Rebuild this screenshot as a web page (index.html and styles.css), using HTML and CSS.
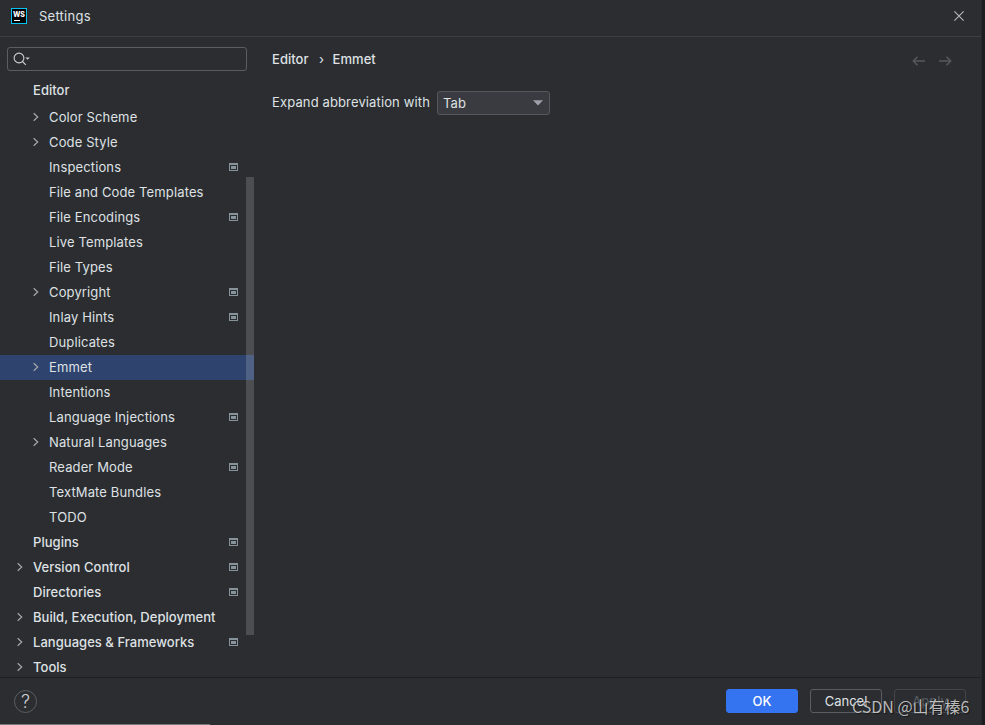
FILE: index.html
```html
<!DOCTYPE html>
<html lang="en">
<head>
<meta charset="utf-8">
<title>Settings</title>
<link rel="stylesheet" href="styles.css">
</head>
<body>
<svg width="0" height="0" class="defs">
  <symbol id="chev" viewBox="0 0 8 10"><path d="M1.700 1.200 5.700 5 1.700 8.800" fill="none" stroke="currentColor" stroke-width="1.2"/></symbol>
  <symbol id="proj" viewBox="0 0 9 8"><path fill-rule="evenodd" d="M0 0h9v8H0zM1 2v5h7V2zM2 3h5v3H2z" fill="currentColor"/></symbol>
</svg>
<div class="window">
  <header class="titlebar">
    <svg class="logo" width="16" height="16" viewBox="0 0 16 16"><rect width="16" height="16" fill="#07c3f2"/><rect x="1" y="1" width="14" height="14" fill="#000"/><text x="2" y="8.700" textLength="12" lengthAdjust="spacingAndGlyphs" class="logo-text">WS</text><path d="M3 12h6v1H3z" fill="#fff"/></svg>
    <span class="title">Settings</span>
    <svg class="close" width="10" height="10" viewBox="0 0 10 10"><path d="M.4.4 9.6 9.6M9.6.4.4 9.6" stroke="#b4b8bf" stroke-width="1.1"/></svg>
  </header>
  <div class="main">
    <aside class="sidebar">
      <div class="search"><svg width="18" height="14" viewBox="0 0 18 14"><circle cx="6" cy="6" r="4.900" fill="none" stroke="#ced0d6" stroke-width="1.1"/><path d="m9.500 9.500 3.300 3.300" stroke="#ced0d6" stroke-width="1.1"/><path d="M12.400 5.500h4.400l-2.200 2.200z" fill="#ced0d6"/></svg></div>
      <div class="row top head"><i></i><span>Editor</span></div>
      <div class="tree">
        <div class="row"><svg class="chev"><use href="#chev"/></svg><span>Color Scheme</span></div>
        <div class="row"><svg class="chev"><use href="#chev"/></svg><span>Code Style</span></div>
        <div class="row"><i></i><span>Inspections</span><svg class="proj"><use href="#proj"/></svg></div>
        <div class="row"><i></i><span>File and Code Templates</span></div>
        <div class="row"><i></i><span>File Encodings</span><svg class="proj"><use href="#proj"/></svg></div>
        <div class="row"><i></i><span>Live Templates</span></div>
        <div class="row"><i></i><span>File Types</span></div>
        <div class="row"><svg class="chev"><use href="#chev"/></svg><span>Copyright</span><svg class="proj"><use href="#proj"/></svg></div>
        <div class="row"><i></i><span>Inlay Hints</span><svg class="proj"><use href="#proj"/></svg></div>
        <div class="row"><i></i><span>Duplicates</span></div>
        <div class="row selected"><svg class="chev"><use href="#chev"/></svg><span>Emmet</span></div>
        <div class="row"><i></i><span>Intentions</span></div>
        <div class="row"><i></i><span>Language Injections</span><svg class="proj"><use href="#proj"/></svg></div>
        <div class="row"><svg class="chev"><use href="#chev"/></svg><span>Natural Languages</span></div>
        <div class="row"><i></i><span>Reader Mode</span><svg class="proj"><use href="#proj"/></svg></div>
        <div class="row"><i></i><span>TextMate Bundles</span></div>
        <div class="row"><i></i><span>TODO</span></div>
        <div class="row top"><i></i><span>Plugins</span><svg class="proj"><use href="#proj"/></svg></div>
        <div class="row top"><svg class="chev"><use href="#chev"/></svg><span>Version Control</span><svg class="proj"><use href="#proj"/></svg></div>
        <div class="row top"><i></i><span>Directories</span><svg class="proj"><use href="#proj"/></svg></div>
        <div class="row top"><svg class="chev"><use href="#chev"/></svg><span>Build, Execution, Deployment</span></div>
        <div class="row top"><svg class="chev"><use href="#chev"/></svg><span>Languages &amp; Frameworks</span><svg class="proj"><use href="#proj"/></svg></div>
        <div class="row top"><svg class="chev"><use href="#chev"/></svg><span>Tools</span></div>
      </div>
      <div class="scrollbar"></div>
    </aside>
    <section class="content">
      <div class="crumbs">
        <span>Editor</span><span class="sep">›</span><span>Emmet</span>
        <svg class="nav" width="40" height="10" viewBox="0 0 40 10"><path d="M13 5H1.5M5.5.8 1.3 5l4.2 4.2M27 5h11.500M34.500.8 38.700 5l-4.200 4.200" fill="none" stroke="#56585c" stroke-width="1.5"/></svg>
      </div>
      <div class="field"><span class="label">Expand abbreviation with</span>
        <div class="select"><span>Tab</span><svg width="10" height="6" viewBox="0 0 10 6"><path d="M0 .3h10L5 5.600z" fill="#9da0a8"/></svg></div>
      </div>
    </section>
  </div>
  <footer class="footer">
    <div class="help">?</div>
    <div class="btn ok">OK</div>
    <div class="btn">Cancel</div>
    <div class="btn disabled">Apply</div>
  </footer>
</div>
<div class="edge"></div>
<div class="bottom-strip"></div>
<div class="watermark">CSDN @山有榛6</div>
</body>
</html>
```
FILE: styles.css
```css
* { box-sizing: border-box; }
body {
  margin: 0;
  width: 985px;
  height: 725px;
  overflow: hidden;
  position: relative;
  display: flex;
  background: #2b2d30;
  color: #dfe1e5;
  font: 13px/16px Inter, "Liberation Sans", sans-serif;
  letter-spacing: 0.13px;
}
.defs { position: absolute; }
svg { display: block; flex: none; }
.window { width: 981px; height: 725px; display: flex; flex-direction: column; }
.titlebar {
  height: 37px;
  flex: none;
  display: flex;
  align-items: center;
  padding: 0 17px 4px 11px;
  border-bottom: 1px solid #3c3e42;
}
.logo-text { font: 800 7.5px Inter, sans-serif; letter-spacing: 0; fill: #fff; }
.title { margin-left: 12px; letter-spacing: 0.25px; }
.close { margin-left: auto; }
.main { height: 640px; display: flex; }
.sidebar {
  width: 254px;
  height: 640px;
  position: relative;
  display: flex;
  flex-direction: column;
  overflow: hidden;
}
.search {
  width: 240px;
  height: 24px;
  margin: 10px 0 0 7px;
  border: 1px solid #5a5d63;
  border-radius: 3px;
  display: flex;
  align-items: center;
  padding-left: 5px;
  flex: none;
}
.row {
  height: 25px;
  display: flex;
  align-items: center;
  padding: 0 16px 1px 32px;
  white-space: nowrap;
  flex: none;
}
.row i { width: 8px; flex: none; }
.row span { margin-left: 9px; }
.chev { width: 8px; height: 10px; color: #a5a8ad; }
.proj { width: 9px; height: 8px; margin-left: auto; color: #87939a; }
.top { padding-left: 16px; font-weight: 550; letter-spacing: 0.04px; }
.head { height: 24px; margin: 7px 0 3px; padding-bottom: 0; }
.tree { flex: none; }
.selected { background: #2e436e; }
.scrollbar {
  position: absolute;
  left: 246px;
  top: 140px;
  width: 8px;
  height: 458px;
  background: rgba(255, 255, 255, 0.16);
}
.content { flex: 1; padding: 14px 29px 0 18px; }
.crumbs { display: flex; align-items: center; height: 16px; font-weight: 550; letter-spacing: 0.04px; }
.sep { width: 24px; padding-left: 2px; text-align: center; font-weight: 400; }
.nav { margin: 4px 0 0 auto; }
.field { display: flex; align-items: center; margin-top: 24px; height: 24px; }
.label { width: 158px; padding-bottom: 2px; white-space: nowrap; }
.select {
  width: 113px;
  height: 24px;
  margin-left: 7px;
  padding: 0 6px 0 5px;
  border: 1px solid #55585d;
  border-radius: 3px;
  background: #393b40;
  display: flex;
  align-items: center;
  justify-content: space-between;
}
.footer {
  height: 48px;
  flex: none;
  border-top: 1px solid #1e1f22;
  display: flex;
  align-items: center;
  gap: 12px;
  padding: 0 15px 1px 14px;
}
.help {
  width: 23px;
  height: 23px;
  margin-right: auto;
  border: 1px solid #5a5d63;
  border-radius: 50%;
  font-size: 18px;
  font-weight: 300;
  line-height: 21px;
  text-align: center;
  letter-spacing: 0;
  color: #ced0d6;
}
.btn {
  width: 72px;
  height: 24px;
  border: 1px solid #5a5d63;
  border-radius: 3px;
  line-height: 23px;
  text-align: center;
  letter-spacing: 0;
}
.ok { background: #3574f0; border-color: #3574f0; color: #fff; font-weight: 550; }
.disabled { border-color: #43454a; color: #5a5d63; }
.edge { width: 4px; height: 725px; background: #1c1d20; border-left: 1px solid #27292c; }
.bottom-strip { position: absolute; left: 0; top: 724px; width: 210px; height: 1px; background: #77797c; }
.watermark {
  position: absolute;
  left: 852px;
  top: 695px;
  font: 16px/22px "Noto Sans CJK SC", sans-serif;
  letter-spacing: 0;
  white-space: nowrap;
  color: rgba(215, 215, 215, 0.85);
  text-shadow: 1px 1px 1px rgba(0, 0, 0, 0.5);
}
```
